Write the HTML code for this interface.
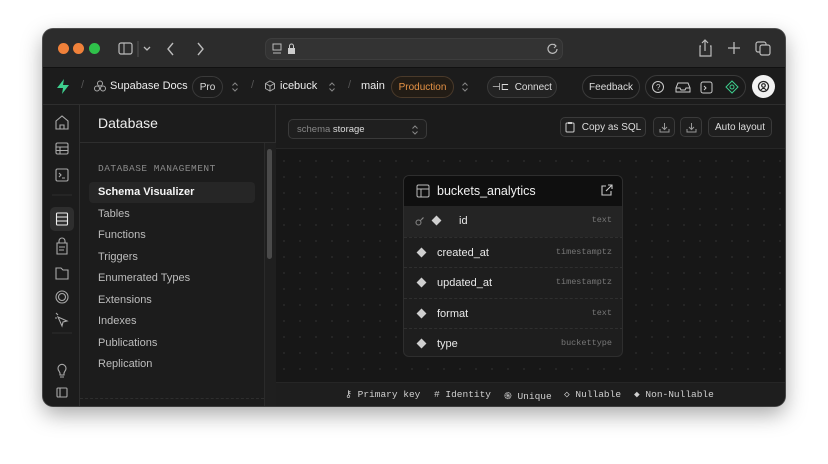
<!DOCTYPE html>
<html><head><meta charset="utf-8"><style>
*{box-sizing:border-box;margin:0;padding:0}
body{width:828px;height:464px;background:#fff;position:relative;overflow:hidden;font-family:"Liberation Sans",sans-serif;color:#ededed}
.win{position:absolute;left:43px;top:29px;width:742px;height:377px;border-radius:10px;overflow:hidden;background:#1c1c1c;box-shadow:0 8px 22px rgba(0,0,0,.35),0 0 0 1px #555}
.abs{position:absolute}
.tb{left:0;top:0;width:742px;height:39px;background:#2c2c2c;border-bottom:1px solid #111}
.dot{width:11px;height:11px;border-radius:50%;top:14px}
.hdr{left:0;top:39px;width:742px;height:37px;background:#1c1c1c;border-bottom:1px solid #2e2e2e}
.pill{border:1px solid #3a3a3a;border-radius:13px;height:22px;font-size:10px;display:flex;align-items:center;justify-content:center;color:#ddd}
.rail{left:0;top:76px;width:37px;height:301px;background:#1c1c1c;border-right:1px solid #2e2e2e}
.side{left:37px;top:76px;width:196px;height:301px;background:#1c1c1c;border-right:1px solid #2e2e2e}
.item{position:absolute;left:18px;font-size:11px;color:#bdbdbd}
.canvas{left:233px;top:76px;width:509px;height:301px;background:#171717;background-image:radial-gradient(#2a2a2a 0.8px,transparent 1px);background-size:16px 16px}
.btn{border:1px solid #3a3a3a;border-radius:5px;height:20px;background:#1f1f1f;font-size:10px;display:flex;align-items:center;justify-content:center;color:#ddd}
.row{position:absolute;left:0;width:219px;height:30.5px;border-top:1px dashed #2f2f2f;font-size:11px}
.row .n{position:absolute;left:33px;top:9px;color:#e8e8e8}
.row .t{position:absolute;right:11px;top:9px;font-family:"Liberation Mono",monospace;font-size:8.5px;color:#777}
.dia{position:absolute;left:14px;top:11px;width:7px;height:7px;background:#cfcfcf;transform:rotate(45deg)}
.mono{font-family:"Liberation Mono",monospace}
.ud{position:absolute;width:8px;height:12px}
</style></head><body>
<div class="win">
 <div class="abs tb">
  <div class="abs dot" style="left:15px;background:#f0813a"></div>
  <div class="abs dot" style="left:30px;background:#f0813a"></div>
  <div class="abs dot" style="left:46px;background:#2fc14a"></div>
  <svg class="abs" style="left:75px;top:12px" width="40" height="16"><rect x="1" y="2" width="13" height="11" rx="2" fill="none" stroke="#bbb" stroke-width="1.2"/><line x1="6" y1="2" x2="6" y2="13" stroke="#bbb"/><line x1="20" y1="0" x2="20" y2="16" stroke="#555"/><path d="M26 6l3 3 3-3" stroke="#bbb" fill="none" stroke-width="1.3"/></svg>
  <svg class="abs" style="left:122px;top:12px" width="45" height="16"><path d="M8 2L3 8l5 6" stroke="#bbb" fill="none" stroke-width="1.4"/><path d="M33 2l5 6-5 6" stroke="#bbb" fill="none" stroke-width="1.4"/></svg>
  <div class="abs" style="left:222px;top:9px;width:298px;height:22px;border-radius:7px;background:#333;border:1px solid #3d3d3d"></div>
  <svg class="abs" style="left:229px;top:14px" width="30" height="14"><rect x="1" y="1" width="8" height="6" fill="none" stroke="#bbb"/><line x1="1" y1="10" x2="9" y2="10" stroke="#bbb"/><rect x="16" y="5" width="7" height="6" fill="#ccc"/><path d="M17.5 5V3a2 2 0 014 0v2" stroke="#ccc" fill="none"/></svg>
  <svg class="abs" style="left:504px;top:13px" width="12" height="14"><path d="M9 4a4.5 4.5 0 1 0 1 3" stroke="#bbb" fill="none" stroke-width="1.2"/><path d="M7 2l2 2-2 2" stroke="#bbb" fill="none"/></svg>
  <svg class="abs" style="left:655px;top:10px" width="80" height="18"><path d="M3 7h-1v10h11V7h-1M7 12V1M4 4l3-3 3 3" stroke="#bbb" fill="none" stroke-width="1.2"/><path d="M36 3v12M30 9h12" stroke="#bbb" stroke-width="1.3"/><rect x="58" y="3" width="10" height="10" rx="2" fill="none" stroke="#bbb" stroke-width="1.2"/><rect x="62" y="6" width="10" height="10" rx="2" fill="#2c2c2c" stroke="#bbb" stroke-width="1.2"/></svg>
 </div>
 <div class="abs hdr">
  <svg class="abs" style="left:13px;top:11px" width="14" height="15"><path d="M8 0L1 9h6l-1 6 7-9H7z" fill="#3ecf8e"/></svg>
  <span class="abs" style="left:38px;top:11px;color:#555;font-size:11px">/</span>
  <svg class="abs" style="left:51px;top:12px" width="12" height="12"><circle cx="6" cy="3.5" r="2.5" fill="none" stroke="#aaa"/><circle cx="3" cy="8.5" r="2.5" fill="none" stroke="#aaa"/><circle cx="9" cy="8.5" r="2.5" fill="none" stroke="#aaa"/></svg>
  <span class="abs" style="left:67px;top:12px;font-size:11px">Supabase Docs</span>
  <div class="abs pill" style="left:149px;top:8px;width:31px">Pro</div>
  <svg class="ud" style="left:188px;top:13px"><path d="M1.5 4.5L4 2l2.5 2.5M1.5 7.5L4 10l2.5-2.5" stroke="#888" fill="none"/></svg>
  <span class="abs" style="left:208px;top:11px;color:#555;font-size:11px">/</span>
  <svg class="abs" style="left:221px;top:12px" width="12" height="12"><path d="M6 1l4.5 2.5v5L6 11 1.5 8.5v-5zM1.5 3.5L6 6l4.5-2.5M6 6v5" stroke="#aaa" fill="none"/></svg>
  <span class="abs" style="left:237px;top:12px;font-size:11px">icebuck</span>
  <svg class="ud" style="left:285px;top:13px"><path d="M1.5 4.5L4 2l2.5 2.5M1.5 7.5L4 10l2.5-2.5" stroke="#888" fill="none"/></svg>
  <span class="abs" style="left:305px;top:11px;color:#555;font-size:11px">/</span>
  <span class="abs" style="left:318px;top:12px;font-size:11px">main</span>
  <div class="abs pill" style="left:348px;top:8px;width:63px;color:#e59245;border-color:#4a3a2a;background:#221c15">Production</div>
  <svg class="ud" style="left:418px;top:13px"><path d="M1.5 4.5L4 2l2.5 2.5M1.5 7.5L4 10l2.5-2.5" stroke="#888" fill="none"/></svg>
  <div class="abs pill" style="left:444px;top:8px;width:70px;background:#232323">⊣⊏&nbsp; Connect</div>
  <div class="abs pill" style="left:539px;top:7px;width:58px;height:24px;background:#1a1a1a">Feedback</div>
  <div class="abs pill" style="left:602px;top:7px;width:101px;height:24px;background:#1a1a1a"></div>
  <svg class="abs" style="left:608px;top:12px" width="90" height="14"><circle cx="7" cy="7" r="5.5" fill="none" stroke="#ccc"/><text x="5" y="10" font-size="8" fill="#ccc" font-family="Liberation Sans">?</text><path d="M27 3h10l2 5v4H25V8zM25 8h4l1 2h4l1-2h4" stroke="#ccc" fill="none"/><rect x="50" y="2" width="11" height="11" rx="2" fill="none" stroke="#ccc"/><path d="M53 6l2 2-2 2" stroke="#ccc" fill="none"/><path d="M81 1l6 6-6 6-6-6z" stroke="#3ecf8e" fill="none"/><circle cx="81" cy="7" r="2" fill="none" stroke="#3ecf8e"/></svg>
  <div class="abs" style="left:709px;top:7px;width:23px;height:23px;border-radius:50%;background:#f2f2f2"></div>
  <svg class="abs" style="left:714px;top:12px" width="13" height="13"><circle cx="6.5" cy="6.5" r="5" fill="none" stroke="#222" stroke-width="1.3"/><circle cx="6.5" cy="5.5" r="1.8" fill="none" stroke="#222" stroke-width="1.2"/><path d="M3.5 10.5l2-2h2l2 2" stroke="#222" fill="none"/></svg>
 </div>
 <div class="abs rail">
  <svg width="37" height="301" fill="none" stroke="#aaa" stroke-width="1.1">
   <path d="M13 16l6-5 6 5v8H13z M17 24v-4h4v4"/>
   <rect x="13" y="38" width="12" height="11" rx="1.5"/><path d="M13 42h12M13 45.5h12M17 42v7"/>
   <rect x="13" y="64" width="12" height="12" rx="1.5"/><path d="M16 68l2 2-2 2M19 73h3"/>
   <line x1="9" y1="90" x2="29" y2="90" stroke="#2e2e2e"/>
   <rect x="7" y="102" width="24" height="24" rx="5" fill="#2e2e2e" stroke="none"/>
   <rect x="13.5" y="108" width="11" height="12" rx="1" stroke="#eee"/><path d="M13.5 112h11M13.5 116h11" stroke="#eee"/>
   <path d="M14 138h10v11H14zM16 138v-2a3 3 0 016 0v2M16 142h6M16 145h5"/>
   <path d="M13 163h5l2 2h5v9H13z"/>
   <circle cx="19" cy="192" r="6"/><circle cx="19" cy="192" r="3.5"/>
   <path d="M15 212l9 4-4 1-1 4zM13 208l2 2M12 213h2"/>
   <line x1="9" y1="228" x2="29" y2="228" stroke="#2e2e2e"/>
   <path d="M16 266a4 4 0 116 0l-1 2v2h-4v-2zM17 272h4"/>
   <rect x="14" y="283" width="10" height="9" rx="1"/><path d="M17 283v9"/>
  </svg>
 </div>
 <div class="abs side">
  <div class="abs" style="left:18px;top:10px;font-size:14px;color:#ededed">Database</div>
  <div class="abs" style="left:0;top:37px;width:196px;border-top:1px solid #2e2e2e"></div>
  <div class="abs mono" style="left:18px;top:58px;font-size:9.5px;color:#8a8a8a;letter-spacing:.5px">DATABASE MANAGEMENT</div>
  <div class="abs" style="left:9px;top:77px;width:166px;height:21px;border-radius:4px;background:#262626"></div>
  <div class="item" style="top:81px;color:#f5f5f5;font-weight:bold">Schema Visualizer</div>
  <div class="item" style="top:103px">Tables</div>
  <div class="item" style="top:124px">Functions</div>
  <div class="item" style="top:146px">Triggers</div>
  <div class="item" style="top:167px">Enumerated Types</div>
  <div class="item" style="top:189px">Extensions</div>
  <div class="item" style="top:210px">Indexes</div>
  <div class="item" style="top:232px">Publications</div>
  <div class="item" style="top:253px">Replication</div>
  <div class="abs" style="left:0;top:293px;width:184px;border-top:1px dashed #2e2e2e"></div>
  <div class="abs" style="left:184px;top:38px;width:12px;height:263px;background:#1f1f1f;border-left:1px solid #2a2a2a"></div>
  <div class="abs" style="left:187px;top:44px;width:5px;height:110px;border-radius:3px;background:#4a4a4a"></div>
 </div>
 <div class="abs canvas">
  <div class="abs" style="left:0;top:0;width:509px;height:44px;border-bottom:1px solid #262626;background:#1b1b1b"></div>
  <div class="abs btn" style="left:12px;top:14px;width:139px;justify-content:flex-start;padding-left:8px;font-size:9.5px"><span style="color:#888">schema&nbsp;</span>storage<svg class="ud" style="right:7px;top:4px"><path d="M1.5 4.5L4 2l2.5 2.5M1.5 7.5L4 10l2.5-2.5" stroke="#888" fill="none"/></svg></div>
  <div class="abs btn" style="left:284px;top:12px;width:86px"><svg width="10" height="12" style="margin-right:7px"><rect x="1" y="2" width="8" height="9" rx="1" fill="none" stroke="#ccc"/><rect x="3" y="1" width="4" height="2" fill="#ccc"/></svg>Copy as SQL</div>
  <div class="abs btn" style="left:377px;top:12px;width:22px"><svg width="11" height="11"><path d="M5.5 1v6M3 5l2.5 2.5L8 5M1 7v3h9V7" stroke="#999" fill="none"/></svg></div>
  <div class="abs btn" style="left:404px;top:12px;width:22px"><svg width="11" height="11"><path d="M5.5 1v6M3 5l2.5 2.5L8 5M1 7v3h9V7" stroke="#999" fill="none"/></svg></div>
  <div class="abs btn" style="left:432px;top:12px;width:64px">Auto layout</div>
  <div class="abs" style="left:127px;top:70px;width:220px;height:182px;border:1px solid #2e2e2e;border-radius:6px;background:#1e1e1e;overflow:hidden">
   <div class="abs" style="left:0;top:0;width:220px;height:30px;background:#0f0f0f"></div>
   <svg class="abs" style="left:12px;top:8px" width="14" height="14"><rect x="1" y="1" width="12" height="12" rx="1.5" fill="none" stroke="#bbb"/><path d="M1 5h12M5 5v8" stroke="#bbb"/></svg>
   <span class="abs" style="left:33px;top:8px;font-size:12.5px;color:#f0f0f0">buckets_analytics</span>
   <svg class="abs" style="left:196px;top:8px" width="13" height="13"><path d="M6 2H2v9h9V7M8 1h4v4M12 1L6 7" stroke="#ccc" fill="none" stroke-width="1.1"/></svg>
   <div class="row" style="top:30px;border-top:none;background:#242424"><svg class="abs" style="left:11px;top:10px" width="10" height="10"><circle cx="3.5" cy="6.5" r="2.5" fill="none" stroke="#888"/><path d="M5.5 4.5l3-3M7 2l1 1" stroke="#888"/></svg><div class="dia" style="left:29px"></div><span class="n" style="left:55px">id</span><span class="t">text</span></div>
   <div class="row" style="top:60.5px"><div class="dia"></div><span class="n">created_at</span><span class="t">timestamptz</span></div>
   <div class="row" style="top:91px"><div class="dia"></div><span class="n">updated_at</span><span class="t">timestamptz</span></div>
   <div class="row" style="top:121.5px"><div class="dia"></div><span class="n">format</span><span class="t">text</span></div>
   <div class="row" style="top:152px"><div class="dia"></div><span class="n">type</span><span class="t">buckettype</span></div>
  </div>
  <div class="abs mono" style="left:0;top:277px;width:509px;height:24px;background:#1e1e1e;border-top:1px solid #262626;font-size:9.5px;color:#cfcfcf">
   <span class="abs" style="left:69px;top:6px">⚷ Primary key</span>
   <span class="abs" style="left:158px;top:6px"># Identity</span>
   <span class="abs" style="left:228px;top:6px">֍ Unique</span>
   <span class="abs" style="left:288px;top:6px">◇ Nullable</span>
   <span class="abs" style="left:358px;top:6px">◆ Non-Nullable</span>
  </div>
 </div>
</div>
</body></html>
